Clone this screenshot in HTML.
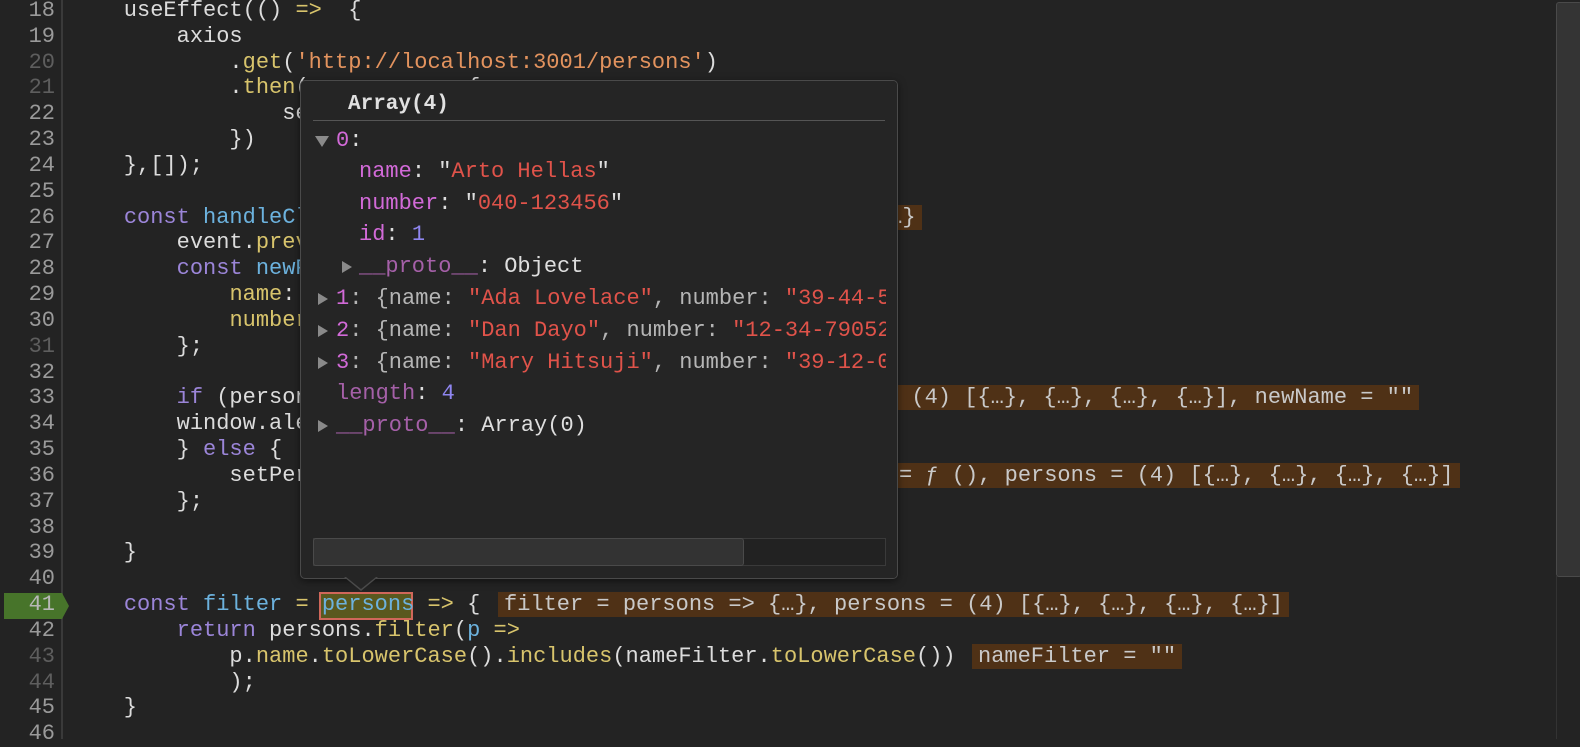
<!DOCTYPE html>
<html><head><meta charset="utf-8"><style>
body{margin:0;width:1580px;height:739px;overflow:hidden;background:#232323;font-family:"Liberation Mono","DejaVu Sans Mono",monospace;font-size:22px;color:#dcdcdc;position:relative}
.ln{position:absolute;left:0;width:55px;text-align:right;color:#9a9a9a;height:26px;line-height:26px}
.dim{color:#5e5e5e}
.c{position:absolute;left:71px;white-space:pre;height:26px;line-height:26px}
.k{color:#9b85d8}.f{color:#6cb2de}.m{color:#d8c46c}.s{color:#e3935e}
.an{position:absolute;background:#4f3116;color:#c9c9c9;white-space:pre;height:25px;line-height:26px;padding:0 6px}
#gut{position:absolute;left:61px;top:0;width:2px;height:739px;background:#3a3a3a}
#pop{position:absolute;left:300px;top:80px;width:596px;height:497px;background:#252525;border:1px solid #4a4a4a;border-radius:5px;box-shadow:0 2px 8px rgba(0,0,0,.5);overflow:hidden;z-index:5}
.p{position:absolute;white-space:pre;line-height:30px}
.pk{color:#d26ad8}.ps{color:#e0534a}.pn{color:#8f86f0}.pd{color:#a560a8}.pw{color:#dedede}.pg{color:#b5b5b5}
.tri{position:absolute;width:0;height:0;border-top:6px solid transparent;border-bottom:6px solid transparent;border-left:10px solid #8a8a8a}
</style></head><body>
<div id="gut"></div>
<div style="position:absolute;left:1556px;top:2px;width:24px;height:573px;background:#343434;border:1px solid #4a4a4a;border-radius:3px"></div>
<div style="position:absolute;left:1556px;top:575px;width:1px;height:164px;background:#333"></div>
<svg style="position:absolute;left:4px;top:593px" width="66" height="26"><polygon points="0,0 58,0 65,13 58,26 0,26" fill="#47742a"/></svg>

<div class="ln" style="top:-2px">18</div><div class="c" style="top:-2px">    useEffect(() <span class="m">=></span>  {</div>
<div class="ln" style="top:24px">19</div><div class="c" style="top:24px">        axios</div>
<div class="ln dim" style="top:50px">20</div><div class="c" style="top:50px">            .<span class="m">get</span>(<span class="s">'http://localhost:3001/persons'</span>)</div>
<div class="ln dim" style="top:75px">21</div><div class="c" style="top:75px">            .<span class="m">then</span>(response => {</div>
<div class="ln" style="top:101px">22</div><div class="c" style="top:101px">                setPersons(response.data)</div>
<div class="ln" style="top:127px">23</div><div class="c" style="top:127px">            })</div>
<div class="ln" style="top:153px">24</div><div class="c" style="top:153px">    },[]);</div>
<div class="ln" style="top:179px">25</div>
<div class="ln" style="top:205px">26</div><div class="c" style="top:205px">    <span class="k">const</span> <span class="f">handleClick</span></div>
<div class="an" style="left:870px;top:205px">{…}</div>
<div class="ln" style="top:230px">27</div><div class="c" style="top:230px">        event.<span class="m">preventDefault</span>()</div>
<div class="ln" style="top:256px">28</div><div class="c" style="top:256px">        <span class="k">const</span> <span class="f">newPerson</span> = {</div>
<div class="ln" style="top:282px">29</div><div class="c" style="top:282px">            <span class="m">name</span>: newName,</div>
<div class="ln" style="top:308px">30</div><div class="c" style="top:308px">            <span class="m">number</span>: newNumber</div>
<div class="ln dim" style="top:334px">31</div><div class="c" style="top:334px">        };</div>
<div class="ln" style="top:360px">32</div>
<div class="ln" style="top:385px">33</div><div class="c" style="top:385px">        <span class="k">if</span> (persons</div>
<div class="an" style="left:879px;top:385px">= (4) [{…}, {…}, {…}, {…}], newName = ""</div>
<div class="ln" style="top:411px">34</div><div class="c" style="top:411px">        window.alert(<span class="s">`phonebook`</span>);</div>
<div class="ln" style="top:437px">35</div><div class="c" style="top:437px">        } <span class="k">else</span> {</div>
<div class="ln" style="top:463px">36</div><div class="c" style="top:463px">            setPersons</div>
<div class="an" style="left:893px;top:463px">= ƒ (), persons = (4) [{…}, {…}, {…}, {…}]</div>
<div class="ln" style="top:489px">37</div><div class="c" style="top:489px">        };</div>
<div class="ln" style="top:515px">38</div>
<div class="ln" style="top:540px">39</div><div class="c" style="top:540px">    }</div>
<div class="ln" style="top:566px">40</div>
<div class="ln" style="top:592px;color:#b8b8b8">41</div>
<div style="position:absolute;left:319px;top:592px;width:90px;height:24px;background:#5a581e;border:2px solid #d0675a"></div>
<div class="c" style="top:592px">    <span class="k">const</span> <span class="f">filter</span> <span class="m">=</span> <span class="f">persons</span> <span class="m">=></span> {</div>
<div class="an" style="left:498px;top:592px">filter = persons => {…}, persons = (4) [{…}, {…}, {…}, {…}]</div>
<div class="ln" style="top:618px">42</div><div class="c" style="top:618px">        <span class="k">return</span> persons.<span class="m">filter</span>(<span class="f">p</span> <span class="m">=></span></div>
<div class="ln dim" style="top:644px">43</div><div class="c" style="top:644px">            p.<span class="m">name</span>.<span class="m">toLowerCase</span>().<span class="m">includes</span>(nameFilter.<span class="m">toLowerCase</span>())</div>
<div class="an" style="left:972px;top:644px">nameFilter = ""</div>
<div class="ln dim" style="top:670px">44</div><div class="c" style="top:670px">            );</div>
<div class="ln" style="top:695px">45</div><div class="c" style="top:695px">    }</div>
<div class="ln" style="top:721px">46</div>

<div id="pop">
 <div class="p" style="left:47px;top:9px;font-weight:bold;color:#e0e0e0;font-size:21px">Array(4)</div>
 <div style="position:absolute;left:12px;top:39px;width:572px;height:1px;background:#555"></div>
 <svg style="position:absolute;left:14px;top:55px" width="14" height="12"><polygon points="0,0 14,0 7,11" fill="#8a8a8a"/></svg>
 <div class="p" style="left:35px;top:45px"><span class="pk">0</span><span class="pw">:</span></div>
 <div class="p" style="left:58px;top:76px"><span class="pk">name</span><span class="pw">: "</span><span class="ps">Arto Hellas</span><span class="pw">"</span></div>
 <div class="p" style="left:58px;top:108px"><span class="pk">number</span><span class="pw">: "</span><span class="ps">040-123456</span><span class="pw">"</span></div>
 <div class="p" style="left:58px;top:139px"><span class="pk">id</span><span class="pw">: </span><span class="pn">1</span></div>
 <div class="tri" style="left:41px;top:180px"></div>
 <div class="p" style="left:58px;top:171px"><span class="pd">__proto__</span><span class="pw">: Object</span></div>
 <div class="tri" style="left:17px;top:212px"></div>
 <div class="p" style="left:35px;top:203px"><span class="pk">1</span><span class="pg">: {name: </span><span class="ps">"Ada Lovelace"</span><span class="pg">, number: </span><span class="ps">"39-44-5323523"</span></div>
 <div class="tri" style="left:17px;top:244px"></div>
 <div class="p" style="left:35px;top:235px"><span class="pk">2</span><span class="pg">: {name: </span><span class="ps">"Dan Dayo"</span><span class="pg">, number: </span><span class="ps">"12-34-790522"</span></div>
 <div class="tri" style="left:17px;top:276px"></div>
 <div class="p" style="left:35px;top:267px"><span class="pk">3</span><span class="pg">: {name: </span><span class="ps">"Mary Hitsuji"</span><span class="pg">, number: </span><span class="ps">"39-12-0000"</span></div>
 <div class="p" style="left:35px;top:298px"><span class="pd">length</span><span class="pw">: </span><span class="pn">4</span></div>
 <div class="tri" style="left:17px;top:339px"></div>
 <div class="p" style="left:35px;top:330px"><span class="pd">__proto__</span><span class="pw">: Array(0)</span></div>
 <div style="position:absolute;left:585px;top:0;width:12px;height:497px;background:#252525"></div>
 <div style="position:absolute;left:12px;top:457px;width:571px;height:26px;background:#222;border:1px solid #3a3a3a"></div>
 <div style="position:absolute;left:12px;top:457px;width:429px;height:26px;background:#333;border:1px solid #4a4a4a;border-radius:3px"></div>
</div>
<svg style="position:absolute;left:344px;top:577px;z-index:6" width="34" height="14"><polygon points="0,0 34,0 17,14" fill="#4a4a4a"/><polygon points="2,0 32,0 17,12" fill="#252525"/></svg>
</body></html>
